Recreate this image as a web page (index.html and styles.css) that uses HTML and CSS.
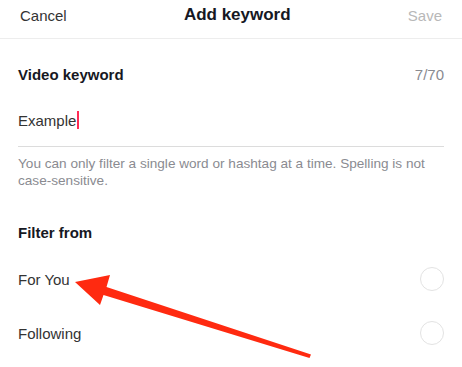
FILE: index.html
```html
<!DOCTYPE html>
<html lang="en">
<head>
    <meta charset="UTF-8">
    <meta name="viewport" content="width=device-width, initial-scale=1.0">
    <title>Add keyword</title>
    <link rel="stylesheet" href="styles.css">
</head>
<body>
    <div class="screen">
        <div class="topbar">
            <span class="topbar-btn">Cancel</span>
            <span class="topbar-title">Add keyword</span>
            <span class="topbar-btn disabled">Save</span>
        </div>

        <div class="section">
            <div class="label-row">
                <span class="label">Video keyword</span>
                <span class="counter">7/70</span>
            </div>
            <div class="input-row">
                <span class="input-text">Example</span><span class="caret"></span>
            </div>
            <p class="hint">You can only filter a single word or hashtag at a time. Spelling is not case-sensitive.</p>
        </div>

        <div class="section">
            <div class="label-row filter-label">
                <span class="label">Filter from</span>
            </div>
            <div class="option">
                <span>For You</span>
                <span class="radio"></span>
            </div>
            <div class="option">
                <span>Following</span>
                <span class="radio"></span>
            </div>
        </div>

        <!-- annotation arrow -->
        <svg class="arrow" width="462" height="367" viewBox="0 0 462 367">
            <polygon fill="#ff2a10" points="75,282 110,275 106.5,287 311,354.5 309.5,358 103.5,295 100,305"/>
        </svg>
    </div>
</body>
</html>
```

FILE: styles.css
```css
body {
    margin: 0;
    padding: 0;
    background: #fff;
    font-family: 'Liberation Sans', Arial, sans-serif;
    color: #161823;
}

.screen {
    position: relative;
    width: 462px;
    height: 367px;
    overflow: hidden;
}

.topbar {
    display: flex;
    justify-content: space-between;
    align-items: center;
    height: 30px;
    padding: 0 20px 8px 20px;
    border-bottom: 1px solid #ededed;
}

.topbar-btn {
    font-size: 15px;
    color: #333;
}

.topbar-btn.disabled {
    color: #b8b8b8;
}

.topbar-title {
    font-size: 17px;
    font-weight: bold;
    color: #161823;
}

.section {
    padding: 0 18px;
}

.label-row {
    display: flex;
    justify-content: space-between;
    align-items: center;
    padding-top: 25px;
    height: 20px;
}

.label {
    font-size: 15px;
    font-weight: bold;
}

.counter {
    font-size: 15px;
    color: #8a8b91;
}

.input-row {
    display: flex;
    align-items: center;
    height: 20px;
    margin-top: 26px;
    padding-bottom: 16px;
    border-bottom: 1px solid #dcdcdc;
}

.input-text {
    font-size: 15px;
    color: #333;
}

.caret {
    display: inline-block;
    width: 2px;
    height: 18px;
    background: #fe2c55;
    margin-left: 1px;
}

.hint {
    margin: 8px 0 0 0;
    max-width: 420px;
    font-size: 13.6px;
    line-height: 17px;
    color: #8a8b91;
}

.filter-label {
    padding-top: 33px;
}

.option {
    display: flex;
    justify-content: space-between;
    align-items: center;
    height: 26px;
    font-size: 15px;
    color: #333;
    margin-top: 24px;
}

.option + .option {
    margin-top: 28px;
}

.radio {
    width: 22px;
    height: 22px;
    border: 1.5px solid #e3e3e3;
    border-radius: 50%;
}

.arrow {
    position: absolute;
    left: 0;
    top: 0;
    pointer-events: none;
}
```
